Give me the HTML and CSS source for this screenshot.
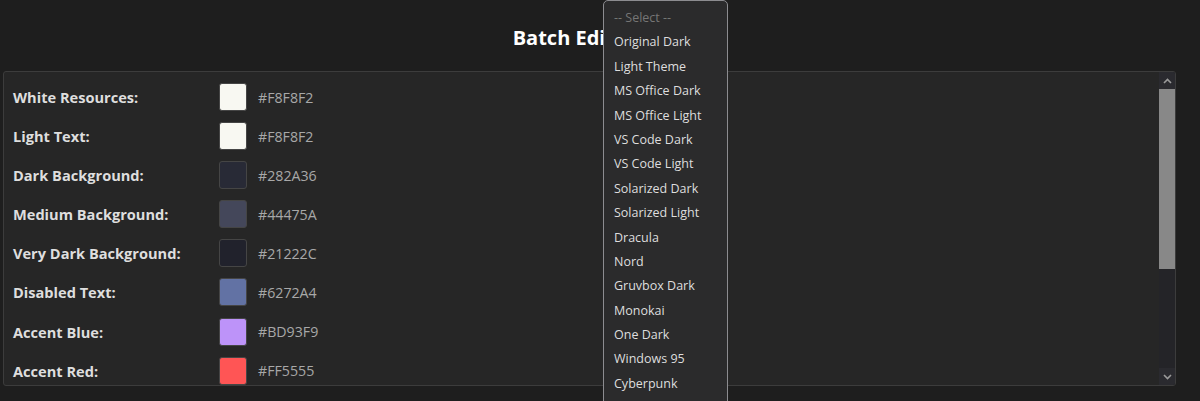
FILE: index.html
```html
<!DOCTYPE html>
<html>
<head>
<meta charset="utf-8">
<link rel="stylesheet" href="styles.css">
</head>
<body>
<header class="header">
  <h2 class="title">Batch Edit Theme</h2>
</header>
<section class="panel">
  <div class="rows">
    <div class="row"><span class="label">White Resources:</span><span class="swatch" style="background:#F8F8F2"></span><span class="hex">#F8F8F2</span></div>
    <div class="row"><span class="label">Light Text:</span><span class="swatch" style="background:#F8F8F2"></span><span class="hex">#F8F8F2</span></div>
    <div class="row"><span class="label">Dark Background:</span><span class="swatch" style="background:#282A36"></span><span class="hex">#282A36</span></div>
    <div class="row"><span class="label">Medium Background:</span><span class="swatch" style="background:#44475A"></span><span class="hex">#44475A</span></div>
    <div class="row"><span class="label">Very Dark Background:</span><span class="swatch" style="background:#21222C"></span><span class="hex">#21222C</span></div>
    <div class="row"><span class="label">Disabled Text:</span><span class="swatch" style="background:#6272A4"></span><span class="hex">#6272A4</span></div>
    <div class="row"><span class="label">Accent Blue:</span><span class="swatch" style="background:#BD93F9"></span><span class="hex">#BD93F9</span></div>
    <div class="row"><span class="label">Accent Red:</span><span class="swatch" style="background:#FF5555"></span><span class="hex">#FF5555</span></div>
  </div>
  <div class="scrollbar">
    <div class="sb-btn"><svg width="9" height="6" viewBox="0 0 9 6"><path d="M1 5 L4.5 1.5 L8 5" fill="none" stroke="#9a9a9a" stroke-width="1.6"/></svg></div>
    <div class="sb-thumb"></div>
    <div class="sb-track"></div>
    <div class="sb-btn"><svg width="9" height="6" viewBox="0 0 9 6"><path d="M1 1 L4.5 4.5 L8 1" fill="none" stroke="#9a9a9a" stroke-width="1.6"/></svg></div>
  </div>
</section>
<div class="dropdown">
  <div class="opt placeholder">-- Select --</div>
  <div class="opt">Original Dark</div>
  <div class="opt">Light Theme</div>
  <div class="opt">MS Office Dark</div>
  <div class="opt">MS Office Light</div>
  <div class="opt">VS Code Dark</div>
  <div class="opt">VS Code Light</div>
  <div class="opt">Solarized Dark</div>
  <div class="opt">Solarized Light</div>
  <div class="opt">Dracula</div>
  <div class="opt">Nord</div>
  <div class="opt">Gruvbox Dark</div>
  <div class="opt">Monokai</div>
  <div class="opt">One Dark</div>
  <div class="opt">Windows 95</div>
  <div class="opt">Cyberpunk</div>
</div>
</body>
</html>
```
FILE: styles.css
```css
html, body {
  margin: 0;
  padding: 0;
  height: 401px;
  overflow: hidden;
  background: #1e1e1e;
  font-family: "Open Sans", "Noto Sans", sans-serif;
  color: #dcdcdc;
}
.header {
  height: 71px;
  display: flex;
  align-items: center;
  justify-content: center;
}
.title {
  margin: 0;
  font-size: 20px;
  font-weight: 700;
  color: #ffffff;
  padding-top: 4px;
}
.panel {
  margin: 0 24px 0 3px;
  height: 313px;
  border: 1px solid #3c3c3c;
  border-radius: 3px;
  background: #262626;
  display: flex;
  overflow: hidden;
}
.rows {
  flex: 1;
  padding: 11px 0 0 9px;
  display: flex;
  flex-direction: column;
  gap: 11.1px;
  overflow: hidden;
}
.row {
  display: flex;
  align-items: center;
  height: 28px;
  flex: none;
}
.label {
  width: 206px;
  font-size: 14.6px;
  font-weight: 700;
  color: #dedede;
}
.swatch {
  width: 26px;
  height: 26px;
  border: 1px solid #454545;
  border-radius: 3px;
  flex: none;
}
.hex {
  margin-left: 11px;
  font-size: 14.2px;
  color: #a8a8a8;
}
.scrollbar {
  width: 16px;
  display: flex;
  flex-direction: column;
  background: #242428;
}
.sb-btn {
  height: 17px;
  display: flex;
  align-items: center;
  justify-content: center;
  background: #2a2a2f;
}
.sb-thumb {
  height: 180px;
  background: #888888;
}
.sb-track {
  flex: 1;
}
.dropdown {
  position: absolute;
  left: 603px;
  top: 0;
  width: 125px;
  height: 420px;
  border: 1px solid #8c8c90;
  border-radius: 5px;
  background: #2b2b2c;
  padding-top: 5px;
  box-sizing: border-box;
}
.opt {
  height: 24.4px;
  line-height: 24px;
  padding-left: 10px;
  font-size: 12.5px;
  color: #dedede;
  white-space: nowrap;
}
.opt.placeholder {
  color: #767676;
}
```
